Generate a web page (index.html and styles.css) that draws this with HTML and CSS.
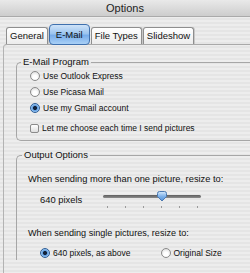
FILE: index.html
```html
<!DOCTYPE html>
<html>
<head>
<meta charset="utf-8">
<link rel="stylesheet" href="styles.css">
</head>
<body>
<div class="window">
  <div class="titlebar">Options</div>
  <div class="tabs">
    <div class="tab">General</div>
    <div class="tab active">E-Mail</div>
    <div class="tab">File Types</div>
    <div class="tab">Slideshow</div>
  </div>
  <div class="panel">
    <fieldset class="group program">
      <legend>E-Mail Program</legend>
      <div class="opt"><span class="radio"></span>Use Outlook Express</div>
      <div class="opt"><span class="radio"></span>Use Picasa Mail</div>
      <div class="opt"><span class="radio on"></span>Use my Gmail account</div>
      <div class="opt check-row"><span class="check"></span>Let me choose each time I send pictures</div>
    </fieldset>
    <fieldset class="group output">
      <legend>Output Options</legend>
      <div class="line">When sending more than one picture, resize to:</div>
      <div class="slider-row">
        <span class="value">640 pixels</span>
        <div class="slider">
          <div class="track"></div>
          <svg class="thumb" width="12" height="11" viewBox="0 0 12 11">
            <defs>
              <linearGradient id="tg" x1="0" y1="0" x2="0" y2="1">
                <stop offset="0" stop-color="#d6e9fb"/>
                <stop offset="0.5" stop-color="#7fb2ea"/>
                <stop offset="1" stop-color="#4f8fd8"/>
              </linearGradient>
            </defs>
            <path d="M1.5 2.5 Q1.5 0.5 3.5 0.5 H8.5 Q10.5 0.5 10.5 2.5 V5.5 L6 10 L1.5 5.5 Z" fill="url(#tg)" stroke="#4a78b0" stroke-width="1"/>
          </svg>
          <div class="ticks"><i></i><i></i><i></i><i></i><i></i><i></i></div>
        </div>
      </div>
      <div class="line single">When sending single pictures, resize to:</div>
      <div class="radio-row">
        <div class="opt2"><span class="radio on"></span>640 pixels, as above</div>
        <div class="opt2"><span class="radio"></span>Original Size</div>
      </div>
    </fieldset>
  </div>
</div>
</body>
</html>
```
FILE: styles.css
```css
html, body {
  margin: 0;
  padding: 0;
}
body {
  width: 250px;
  height: 273px;
  overflow: hidden;
  font-family: "Liberation Sans", Arial, sans-serif;
  color: #111;
  background: repeating-linear-gradient(to bottom, #ededed 0 2px, #e5e5e5 2px 4px);
}
.window {
  width: 250px;
  height: 273px;
  overflow: hidden;
}
.titlebar {
  height: 16px;
  line-height: 16px;
  text-align: center;
  font-size: 11px;
  color: #222;
  background: linear-gradient(to bottom, #e9e9e9, #cdcdcd);
  border-bottom: 1px solid #aaaaaa;
}
.tabs {
  display: flex;
  align-items: flex-end;
  height: 27px;
  padding-left: 6px;
  position: relative;
  z-index: 2;
}
.tab {
  height: 16px;
  line-height: 16px;
  padding: 0 3px;
  font-size: 9.5px;
  border: 1px solid #8e8e8e;
  border-bottom: none;
  border-radius: 3px 3px 0 0;
  background: linear-gradient(to bottom, #ffffff, #ececec);
  box-shadow: 1px 0 0 #c8c8c8;
  margin-right: 1px;
}
.tab.active {
  height: 19px;
  line-height: 19px;
  padding: 0 6px;
  margin-bottom: -1px;
  border: 1px solid #3f70ae;
  border-radius: 4px;
  background: linear-gradient(to bottom, #cfe3f8 0%, #9cc5ef 45%, #78adea 55%, #a9d0f6 100%);
  box-shadow: none;
}
.panel {
  margin-left: 3px;
  height: 228px;
  border-top: 1px solid #a9a9a9;
  border-left: 1px solid #b3b3b3;
  border-top-left-radius: 4px;
}
.group {
  margin: 0 0 0 12px;
  padding: 0 0 0 13px;
  border: 1px solid #a6a6a6;
  border-right: none;
  border-radius: 5px 0 0 5px;
  min-width: 0;
}
.group legend {
  font-size: 9.5px;
  line-height: 12px;
  padding: 0 2px;
  margin-left: -9px;
}
.program {
  margin-top: 11px;
  padding-bottom: 4px;
}
.opt {
  display: flex;
  align-items: center;
  height: 16px;
  font-size: 8.5px;
  gap: 3px;
}
.check-row {
  margin-top: 4px;
}
.radio {
  width: 10px;
  height: 10px;
  box-sizing: border-box;
  border-radius: 50%;
  border: 1px solid #8a8a8a;
  background: radial-gradient(circle at 50% 65%, #ffffff 0 30%, #e6e6e6 70%, #cfcfcf 100%);
  flex: none;
}
.radio.on {
  border-color: #2f5e96;
  background: radial-gradient(circle at 50% 50%, #13233a 0 1.6px, #5d9be0 2.4px, #9cc8f2 70%, #6aa4e2 100%);
}
.check {
  width: 9px;
  height: 9px;
  box-sizing: border-box;
  border: 1px solid #8a8a8a;
  border-radius: 2px;
  background: linear-gradient(to bottom, #ffffff, #dedede);
  flex: none;
}
.output {
  margin-top: 8px;
  padding: 0 0 0 11px;
  height: 110px;
  border-bottom: none;
  border-radius: 5px 0 0 0;
}
.output legend {
  margin-left: -6px;
}
.line {
  font-size: 9.3px;
  line-height: 12px;
  margin-top: 12px;
}
.line.single {
  font-size: 9.1px;
  margin-top: 17px;
}
.slider-row {
  display: grid;
  grid-template-columns: 63px 98px;
  align-items: center;
  height: 20px;
  margin-top: 5px;
  padding-left: 12px;
}
.value {
  font-size: 9.4px;
  line-height: 12px;
}
.slider {
  position: relative;
  height: 20px;
}
.track {
  margin-top: 5px;
  height: 3px;
  border-radius: 2px;
  background: linear-gradient(to bottom, #5c5c5c, #8c8c8c);
}
.thumb {
  position: absolute;
  left: 53px;
  top: 1px;
}
.ticks {
  display: flex;
  justify-content: space-between;
  margin: 8px 3px 0 4px;
}
.ticks i {
  width: 1px;
  height: 2px;
  background: #9a9a9a;
}
.radio-row {
  display: flex;
  align-items: center;
  height: 12px;
  margin-top: 8px;
  padding-left: 12px;
}
.opt2 {
  display: flex;
  align-items: center;
  gap: 3px;
  font-size: 8.5px;
}
.opt2 + .opt2 {
  margin-left: 30px;
}
```
